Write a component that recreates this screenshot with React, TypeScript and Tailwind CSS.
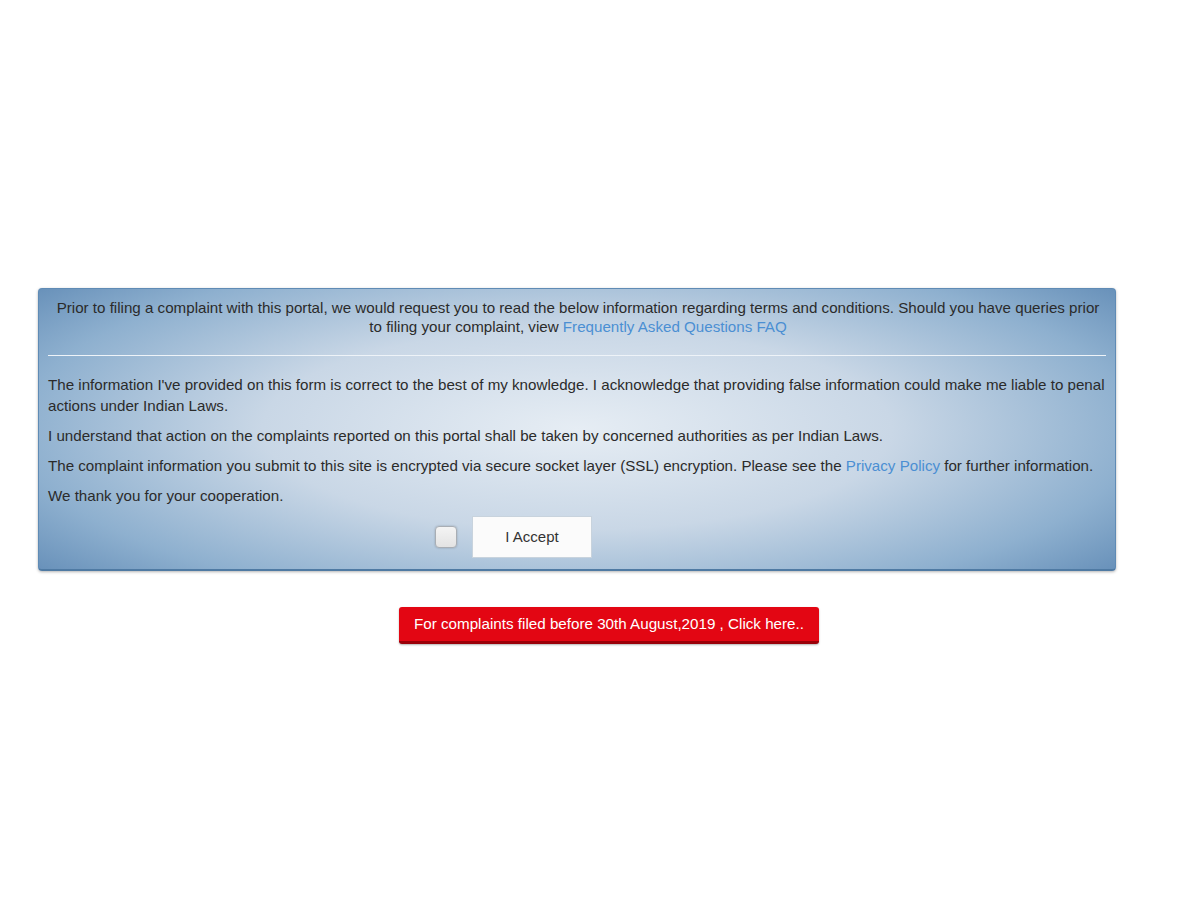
import React from "react";

export default function App() {
  return (
    <div className="w-[1200px] h-[900px] bg-white" style={{ fontFamily: '"Liberation Sans", Arial, sans-serif' }}>
      <div className="pt-[288px]">
        <div className="ml-[38px] w-[1078px] h-[283px] rounded-[4px] border border-[#5f8bb5] border-b-[2px] border-b-[#4f7aa3] shadow-[0_1px_3px_rgba(0,0,0,0.3)] bg-[radial-gradient(ellipse_65%_80%_at_50%_50%,#e6edf4_0%,#c9d7e6_45%,#8eb0cf_80%,#6790b9_100%)] pl-[9px] pr-[7px] pt-[9px] text-[15.15px] text-[#2b2b2b]">
          <p className="text-center leading-[19px] px-[6px]">
            Prior to filing a complaint with this portal, we would request you to read the below information regarding terms and conditions. Should you have queries prior to filing your complaint, view <span className="text-[#4b8fd3]">Frequently Asked Questions FAQ</span>
          </p>
          <div className="mt-[19px] mr-[2px] h-px bg-[#eef3f8]" />
          <p className="mt-[18px] leading-[21px]">
            The information I've provided on this form is correct to the best of my knowledge. I acknowledge that providing false information could make me liable to penal actions under Indian Laws.
          </p>
          <p className="mt-[9px] leading-[21px]">
            I understand that action on the complaints reported on this portal shall be taken by concerned authorities as per Indian Laws.
          </p>
          <p className="mt-[9px] leading-[21px]">
            The complaint information you submit to this site is encrypted via secure socket layer (SSL) encryption. Please see the <span className="text-[#4b8fd3]">Privacy Policy</span> for further information.
          </p>
          <p className="mt-[9px] leading-[21px]">We thank you for your cooperation.</p>
          <div className="mt-[10px] flex items-center ml-[387px]">
            <div className="w-[22px] h-[22px] rounded-[4px] border border-[#a9aeb4] bg-[linear-gradient(#f4f4f4,#e3e3e3)] shadow-[0_0_2px_rgba(0,0,0,0.25)]" />
            <div className="ml-[15px] w-[120px] h-[42px] bg-[#fbfbfb] border border-[#c8d3dd] flex items-center justify-center text-[15px] text-[#333]">
              I Accept
            </div>
          </div>
        </div>
        <div className="mt-[36px] ml-[399px] w-[420px] h-[37px] rounded-[3px] bg-[#e30613] border-b-[3px] border-b-[#9a0008] shadow-[0_1px_2px_rgba(0,0,0,0.3)] flex items-center justify-center text-white text-[15.2px]">
          For complaints filed before 30th August,2019 , Click here..
        </div>
      </div>
    </div>
  );
}
